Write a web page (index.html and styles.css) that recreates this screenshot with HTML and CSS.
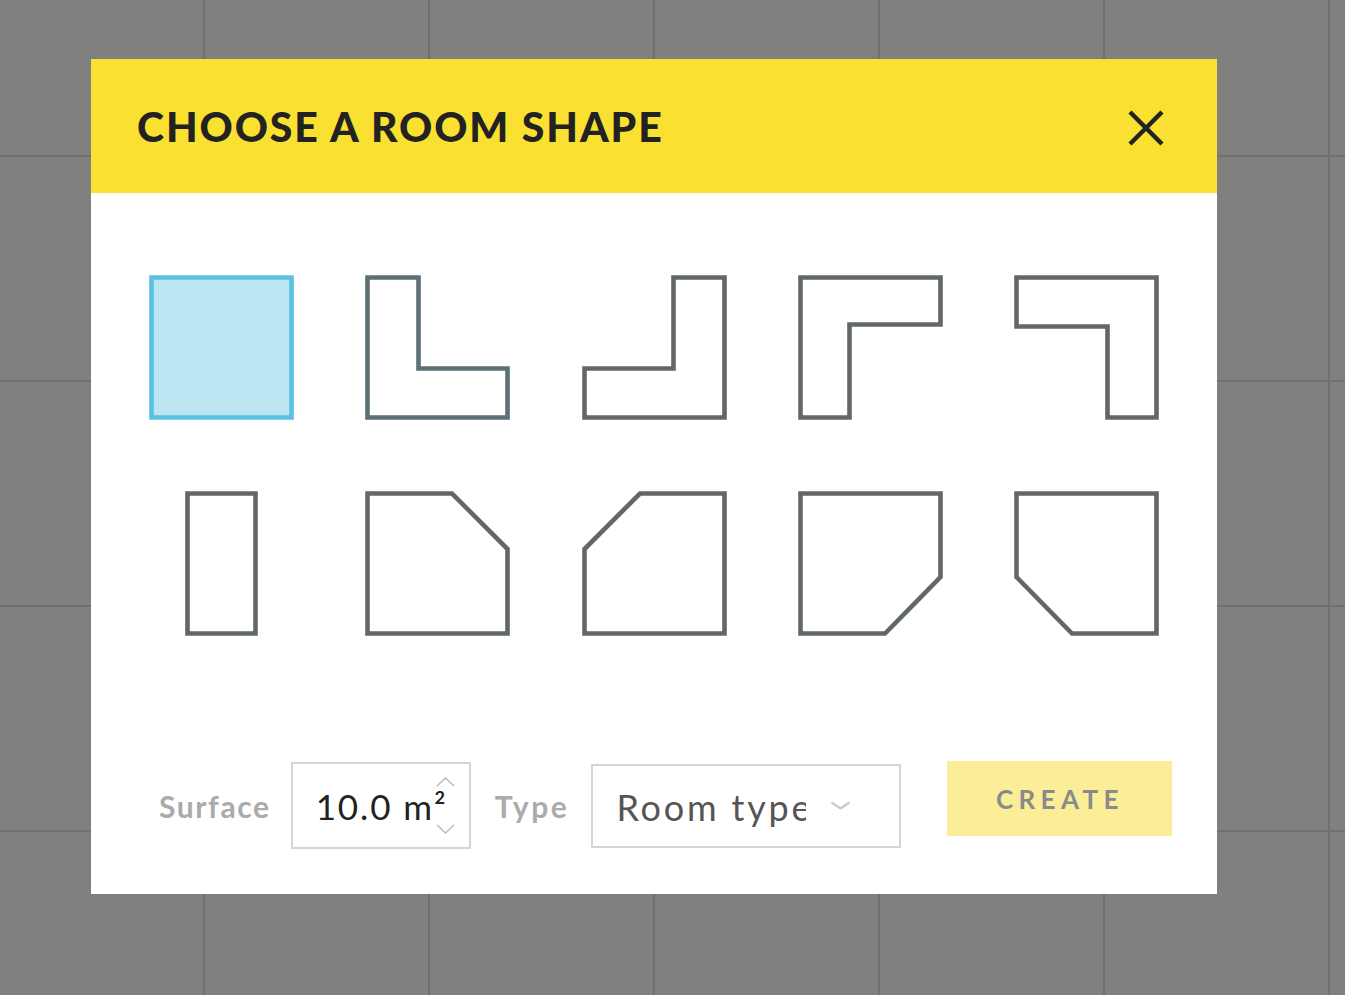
FILE: index.html
```html
<!DOCTYPE html>
<html lang="en">
<head>
<meta charset="utf-8">
<title>Choose a room shape</title>
<link rel="stylesheet" href="styles.css">
</head>
<body>
<div class="modal">
  <div class="modal-header">
    <h1 class="modal-title">CHOOSE A ROOM SHAPE</h1>
    <button class="close-btn" aria-label="Close">
      <svg width="36" height="36" viewBox="0 0 36 36"><path d="M2 2 L34 34 M34 2 L2 34" stroke="#222" stroke-width="4.5" fill="none"/></svg>
    </button>
  </div>
  <div class="modal-body">
    <div class="shapes">
      <div class="shape selected"><svg width="145" height="145" viewBox="0 0 145 145"><polygon points="2.5,2.5 142.5,2.5 142.5,142.5 2.5,142.5"/></svg></div>
      <div class="shape hover"><svg width="145" height="145" viewBox="0 0 145 145"><polygon points="2.5,2.5 53.5,2.5 53.5,93.5 142.5,93.5 142.5,142.5 2.5,142.5"/></svg></div>
      <div class="shape"><svg width="145" height="145" viewBox="0 0 145 145"><polygon points="91.5,2.5 142.5,2.5 142.5,142.5 2.5,142.5 2.5,93.5 91.5,93.5"/></svg></div>
      <div class="shape"><svg width="145" height="145" viewBox="0 0 145 145"><polygon points="2.5,2.5 142.5,2.5 142.5,49.5 51.5,49.5 51.5,142.5 2.5,142.5"/></svg></div>
      <div class="shape"><svg width="145" height="145" viewBox="0 0 145 145"><polygon points="2.5,2.5 142.5,2.5 142.5,142.5 93.5,142.5 93.5,51.5 2.5,51.5"/></svg></div>

      <div class="shape"><svg width="145" height="145" viewBox="0 0 145 145"><polygon points="38.5,2.5 106.5,2.5 106.5,142.5 38.5,142.5"/></svg></div>
      <div class="shape"><svg width="145" height="145" viewBox="0 0 145 145"><polygon points="2.5,2.5 87,2.5 142.5,58 142.5,142.5 2.5,142.5"/></svg></div>
      <div class="shape"><svg width="145" height="145" viewBox="0 0 145 145"><polygon points="58,2.5 142.5,2.5 142.5,142.5 2.5,142.5 2.5,58"/></svg></div>
      <div class="shape"><svg width="145" height="145" viewBox="0 0 145 145"><polygon points="2.5,2.5 142.5,2.5 142.5,86 87,142.5 2.5,142.5"/></svg></div>
      <div class="shape"><svg width="145" height="145" viewBox="0 0 145 145"><polygon points="2.5,2.5 142.5,2.5 142.5,142.5 58,142.5 2.5,86"/></svg></div>
    </div>

    <div class="footer">
      <span class="label label-surface">Surface</span>
      <div class="number-input">
        <span class="value">10.0 m²</span>
        <span class="spinner">
          <svg width="19" height="10" viewBox="0 0 19 10"><path d="M1 9 L9.5 1 L18 9" stroke="#bdbdbd" stroke-width="1.6" fill="none"/></svg>
          <svg width="19" height="10" viewBox="0 0 19 10"><path d="M1 1 L9.5 9 L18 1" stroke="#bdbdbd" stroke-width="1.6" fill="none"/></svg>
        </span>
      </div>
      <span class="label label-type">Type</span>
      <div class="select">
        <span class="select-text">Room type</span>
        <svg class="select-caret" width="21" height="9" viewBox="0 0 21 9"><path d="M1.5 1.5 L10.5 7.5 L19.5 1.5" stroke="#c8c8c8" stroke-width="2.2" fill="none"/></svg>
      </div>
      <button class="create-btn">CREATE</button>
    </div>
  </div>
</div>
</body>
</html>
```

FILE: styles.css
```css
html, body {
  margin: 0;
  padding: 0;
}

body {
  width: 1345px;
  height: 995px;
  box-sizing: border-box;
  padding: 59px 0 0 91px;
  background-color: #808080;
  background-image:
    linear-gradient(to right, #707070 2px, transparent 2px),
    linear-gradient(to bottom, #707070 2px, transparent 2px);
  background-size: 225px 225px;
  background-position: 203px 155px;
  font-family: "Lato", "Liberation Sans", sans-serif;
  overflow: hidden;
}

.modal {
  width: 1126px;
  height: 835px;
  background: #ffffff;
  display: flex;
  flex-direction: column;
}

.modal-header {
  height: 134px;
  flex: none;
  background: #f9e031;
  display: flex;
  align-items: center;
  justify-content: space-between;
  padding: 0 53px 0 46px;
}

.modal-title {
  margin: 0;
  font-family: "Lato", "Liberation Sans", sans-serif;
  font-weight: 900;
  font-size: 41px;
  letter-spacing: 1.9px;
  color: #222222;
  line-height: 1;
  padding-top: 1px;
}

.close-btn {
  border: 0;
  background: transparent;
  padding: 0;
  width: 36px;
  height: 36px;
  display: flex;
  margin-top: 4px;
}

.modal-body {
  flex: 1;
  display: flex;
  flex-direction: column;
  padding: 82px 0 0 0;
}

.shapes {
  display: grid;
  grid-template-columns: repeat(5, 145px);
  column-gap: 71.25px;
  row-gap: 71px;
  padding: 0 58px;
}

.shape {
  width: 145px;
  height: 145px;
}

.shape svg {
  display: block;
}

.shape polygon {
  fill: #ffffff;
  stroke: #626868;
  stroke-width: 4.6;
  stroke-linejoin: miter;
}

.shape.selected polygon {
  fill: #bde6f3;
  stroke: #5bc0e3;
}

.shape.hover polygon {
  stroke: #5e7076;
}

.footer {
  margin-top: 126px;
  display: flex;
  align-items: center;
  padding-left: 68px;
}

.label {
  flex: none;
  white-space: nowrap;
  font-family: "Lato", "Liberation Sans", sans-serif;
  font-weight: 700;
  font-size: 30px;
  color: #ababab;
}

.label-surface {
  letter-spacing: 1.6px;
  margin-right: 20px;
}

.label-type {
  letter-spacing: 2.6px;
  margin: 0 22px 0 24px;
}

.number-input {
  position: relative;
  flex: none;
  width: 180px;
  height: 87px;
  box-sizing: border-box;
  border: 2px solid #d5d5d5;
  display: flex;
  align-items: center;
  padding: 0 0 0 23px;
}

.value {
  flex: none;
  white-space: nowrap;
  font-family: "Lato", "Liberation Sans", sans-serif;
  font-size: 35px;
  color: #222222;
  letter-spacing: 1.9px;
  padding-top: 1px;
}

.spinner {
  position: absolute;
  right: 14px;
  top: 13px;
  bottom: 13px;
  display: flex;
  flex-direction: column;
  justify-content: space-between;
}

.spinner svg {
  display: block;
}

.select {
  flex: none;
  width: 310px;
  height: 84px;
  box-sizing: border-box;
  border: 2px solid #d5d5d5;
  display: flex;
  align-items: center;
  padding-left: 23px;
}

.select-text {
  flex: none;
  width: 190px;
  overflow: hidden;
  white-space: nowrap;
  font-family: "Lato", "Liberation Sans", sans-serif;
  font-size: 36px;
  color: #555555;
  letter-spacing: 2.8px;
  padding-top: 2px;
}

.select-caret {
  flex: none;
  margin-left: 24px;
  display: block;
}

.create-btn {
  flex: none;
  align-self: flex-start;
  margin-top: -1px;
  margin-left: 46px;
  width: 225px;
  height: 75px;
  border: 0;
  background: #fcee98;
  font-family: "Lato", "Liberation Sans", sans-serif;
  font-weight: 700;
  font-size: 26px;
  letter-spacing: 5.4px;
  color: #8a8a8a;
  padding: 0;
}
```
